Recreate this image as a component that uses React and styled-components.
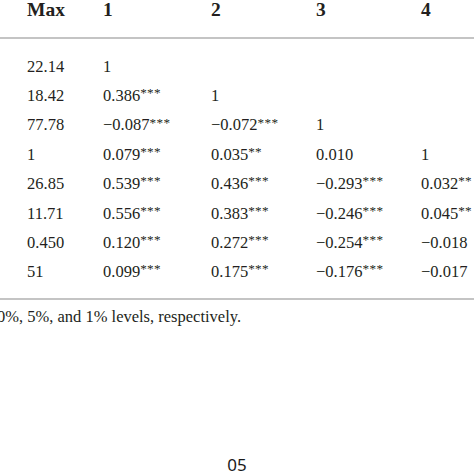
import React from 'react'
import styled, { createGlobalStyle } from 'styled-components'

const GlobalStyle = createGlobalStyle`
  html, body {
    margin: 0;
    padding: 0;
    background: #ffffff;
    overflow: hidden;
  }
  body {
    width: 474px;
    height: 474px;
    font-family: "Liberation Serif", "Times New Roman", serif;
    color: #231f20;
  }
`

const Page = styled.div`
  width: 474px;
  height: 474px;
  overflow: hidden;
`

const Table = styled.div`
  display: flex;
  flex-direction: column;
`

const HeadRow = styled.div`
  display: grid;
  grid-template-columns: 76px 108px 105px 105px 1fr;
  padding-left: 27px;
  padding-bottom: 17px;
  border-bottom: 2px solid #c4c4c4;
  font-size: 19.5px;
  font-weight: bold;
  line-height: 20px;
  white-space: nowrap;
`

const Body = styled.div`
  padding-top: 12.7px;
  padding-bottom: 11px;
  border-bottom: 2px solid #c4c4c4;
`

const Row = styled.div`
  display: grid;
  grid-template-columns: 76px 108px 105px 105px 1fr;
  padding-left: 27px;
  font-size: 16.5px;
  line-height: 29.4px;
  height: 29.4px;
  white-space: nowrap;
`

const Cell = styled.span`
  white-space: nowrap;
`

const Stars = styled.span`
  font-size: 0.8em;
  line-height: 0;
  position: relative;
  top: -0.3em;
  letter-spacing: 0.03em;
`

const Note = styled.div`
  margin-top: 7px;
  margin-left: -3px;
  font-size: 16.5px;
  line-height: 20px;
  white-space: nowrap;
`

const PageNumber = styled.div`
  margin-top: 129px;
  text-align: center;
  font-family: "Noto Sans", "Open Sans", sans-serif;
  font-size: 17px;
  line-height: 18px;
  color: #1a1a1a;
`

const heads = ['Max', '1', '2', '3', '4']

const rows = [
  ['22.14', '1'],
  ['18.42', '0.386***', '1'],
  ['77.78', '−0.087***', '−0.072***', '1'],
  ['1', '0.079***', '0.035**', '0.010', '1'],
  ['26.85', '0.539***', '0.436***', '−0.293***', '0.032**'],
  ['11.71', '0.556***', '0.383***', '−0.246***', '0.045**'],
  ['0.450', '0.120***', '0.272***', '−0.254***', '−0.018'],
  ['51', '0.099***', '0.175***', '−0.176***', '−0.017'],
]

const Value = ({ text }) => {
  const m = text.match(/^([^*]*)(\**)$/)
  return (
    <Cell>
      {m[1]}
      {m[2] && <Stars>{m[2]}</Stars>}
    </Cell>
  )
}

const App = () => (
  <Page>
    <GlobalStyle />
    <Table>
      <HeadRow>
        {heads.map((h) => (
          <Cell key={h}>{h}</Cell>
        ))}
      </HeadRow>
      <Body>
        {rows.map((r, i) => (
          <Row key={i}>
            {r.map((v, j) => (
              <Value key={j} text={v} />
            ))}
          </Row>
        ))}
      </Body>
    </Table>
    <Note>0%, 5%, and 1% levels, respectively.</Note>
    <PageNumber>05</PageNumber>
  </Page>
)

export default App
